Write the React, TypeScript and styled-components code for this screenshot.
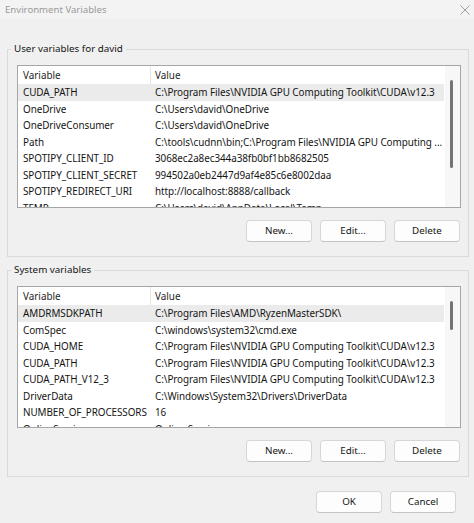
import React from 'react';
import styled, { createGlobalStyle } from 'styled-components';

const Global = createGlobalStyle`
  html, body { margin: 0; padding: 0; background: #f0f0f0; }
  body {
    font-family: "Noto Sans", "Open Sans", sans-serif;
    font-size: 9.9px;
    color: #141414;
  }
`;

const Window = styled.div`
  width: 474px;
  height: 523px;
  box-sizing: border-box;
  display: flex;
  flex-direction: column;
  background: #f0f0f0;
  overflow: hidden;
`;

const TitleBar = styled.div`
  height: 19px;
  flex: none;
  display: flex;
  align-items: center;
  justify-content: space-between;
  padding: 0 4px 0 5px;
  background: #f3f3f3;
  color: #9a9a9a;
`;

const TitleText = styled.span`
  font-size: 9.6px;
  line-height: 16px;
`;

const CloseIcon = styled.svg`
  display: block;
  width: 10px;
  height: 10px;
`;

const Body = styled.div`
  display: flex;
  flex-direction: column;
  padding: 30px 5px 0 7px;
`;

const Group = styled.section<{ $gapTop?: number }>`
  position: relative;
  width: 462px;
  box-sizing: border-box;
  border: 1px solid #dadada;
  margin-top: ${(p) => p.$gapTop ?? 0}px;
  padding: 15px 7px 14px 9px;
  display: flex;
  flex-direction: column;
  gap: 12px;
`;

const GroupLabel = styled.span`
  position: absolute;
  top: -9px;
  left: 3px;
  padding: 0 3px;
  line-height: 16px;
  font-size: 9.8px;
  background: #f0f0f0;
  color: #141414;
`;

const ListBox = styled.div<{ $height: number }>`
  height: ${(p) => p.$height}px;
  box-sizing: border-box;
  border: 1px solid #a6a6a6;
  background: #ffffff;
  display: flex;
  overflow: hidden;
`;

const Rows = styled.div`
  flex: 1;
  min-width: 0;
  display: flex;
  flex-direction: column;
  padding-right: 1px;
  overflow: hidden;
`;

const HeaderRow = styled.div`
  flex: none;
  height: 18px;
  display: grid;
  grid-template-columns: 132px 1fr;
  align-items: center;
  color: #262626;
`;

const HeaderCell = styled.div<{ $divider?: boolean }>`
  height: 100%;
  display: flex;
  align-items: center;
  padding-left: ${(p) => (p.$divider ? 4 : 5)}px;
  border-left: ${(p) => (p.$divider ? '1px solid #e5e5e5' : 'none')};
  white-space: nowrap;
  overflow: hidden;
`;

const Row = styled.div<{ $selected?: boolean }>`
  flex: none;
  height: 16.5px;
  display: grid;
  grid-template-columns: 132px 1fr;
  align-items: center;
  background: ${(p) => (p.$selected ? '#ebebeb' : 'transparent')};
`;

const Cell = styled.div`
  padding-left: 5px;
  white-space: nowrap;
  overflow: hidden;
  line-height: 16px;
  letter-spacing: -0.06px;
`;

const ScrollTrack = styled.div`
  flex: none;
  width: 15px;
  background: #f7f7f7;
  display: flex;
  flex-direction: column;
  align-items: flex-start;
`;

const ScrollThumb = styled.div<{ $top: number; $size: number }>`
  margin-top: ${(p) => p.$top}px;
  margin-left: 5px;
  width: 3px;
  height: ${(p) => p.$size}px;
  border-radius: 2px;
  background: #747474;
`;

const ButtonRow = styled.div<{ $right?: number }>`
  display: flex;
  justify-content: flex-end;
  gap: 8px;
  padding-right: ${(p) => p.$right ?? 1}px;
`;

const Button = styled.button`
  width: 66px;
  height: 22px;
  box-sizing: border-box;
  border: 1px solid #d6d6d6;
  border-bottom-color: #c4c4c4;
  border-radius: 4px;
  background: #fdfdfd;
  font-family: inherit;
  font-size: 9.8px;
  color: #141414;
  padding: 0;
  line-height: 18px;
`;

const Footer = styled(ButtonRow)`
  margin-top: 14px;
`;

type Item = [string, string];

const userVars: Item[] = [
  ['CUDA_PATH', 'C:\\Program Files\\NVIDIA GPU Computing Toolkit\\CUDA\\v12.3'],
  ['OneDrive', 'C:\\Users\\david\\OneDrive'],
  ['OneDriveConsumer', 'C:\\Users\\david\\OneDrive'],
  ['Path', 'C:\\tools\\cudnn\\bin;C:\\Program Files\\NVIDIA GPU Computing ...'],
  ['SPOTIPY_CLIENT_ID', '3068ec2a8ec344a38fb0bf1bb8682505'],
  ['SPOTIPY_CLIENT_SECRET', '994502a0eb2447d9af4e85c6e8002daa'],
  ['SPOTIPY_REDIRECT_URI', 'http://localhost:8888/callback'],
  ['TEMP', 'C:\\Users\\david\\AppData\\Local\\Temp'],
];

const systemVars: Item[] = [
  ['AMDRMSDKPATH', 'C:\\Program Files\\AMD\\RyzenMasterSDK\\'],
  ['ComSpec', 'C:\\windows\\system32\\cmd.exe'],
  ['CUDA_HOME', 'C:\\Program Files\\NVIDIA GPU Computing Toolkit\\CUDA\\v12.3'],
  ['CUDA_PATH', 'C:\\Program Files\\NVIDIA GPU Computing Toolkit\\CUDA\\v12.3'],
  ['CUDA_PATH_V12_3', 'C:\\Program Files\\NVIDIA GPU Computing Toolkit\\CUDA\\v12.3'],
  ['DriverData', 'C:\\Windows\\System32\\Drivers\\DriverData'],
  ['NUMBER_OF_PROCESSORS', '16'],
  ['OnlineServices', 'Online Services'],
];

function VarList({
  items,
  height,
  thumbTop,
  thumbSize,
}: {
  items: Item[];
  height: number;
  thumbTop: number;
  thumbSize: number;
}) {
  return (
    <ListBox $height={height}>
      <Rows>
        <HeaderRow>
          <HeaderCell>Variable</HeaderCell>
          <HeaderCell $divider>Value</HeaderCell>
        </HeaderRow>
        {items.map(([k, v], i) => (
          <Row key={k} $selected={i === 0}>
            <Cell>{k}</Cell>
            <Cell>{v}</Cell>
          </Row>
        ))}
      </Rows>
      <ScrollTrack>
        <ScrollThumb $top={thumbTop} $size={thumbSize} />
      </ScrollTrack>
    </ListBox>
  );
}

function Actions() {
  return (
    <ButtonRow>
      <Button>New...</Button>
      <Button>Edit...</Button>
      <Button>Delete</Button>
    </ButtonRow>
  );
}

export default function App() {
  return (
    <>
      <Global />
      <Window>
        <TitleBar>
          <TitleText>Environment Variables</TitleText>
          <CloseIcon viewBox="0 0 10 10">
            <path d="M0.5 0.5 L9.5 9.5 M9.5 0.5 L0.5 9.5" stroke="#a0a0a0" strokeWidth="1" fill="none" />
          </CloseIcon>
        </TitleBar>
        <Body>
          <Group>
            <GroupLabel>User variables for david</GroupLabel>
            <VarList items={userVars} height={143} thumbTop={14} thumbSize={88} />
            <Actions />
          </Group>
          <Group $gapTop={13}>
            <GroupLabel>System variables</GroupLabel>
            <VarList items={systemVars} height={142} thumbTop={14} thumbSize={29} />
            <Actions />
          </Group>
          <Footer $right={13}>
            <Button>OK</Button>
            <Button>Cancel</Button>
          </Footer>
        </Body>
      </Window>
    </>
  );
}
